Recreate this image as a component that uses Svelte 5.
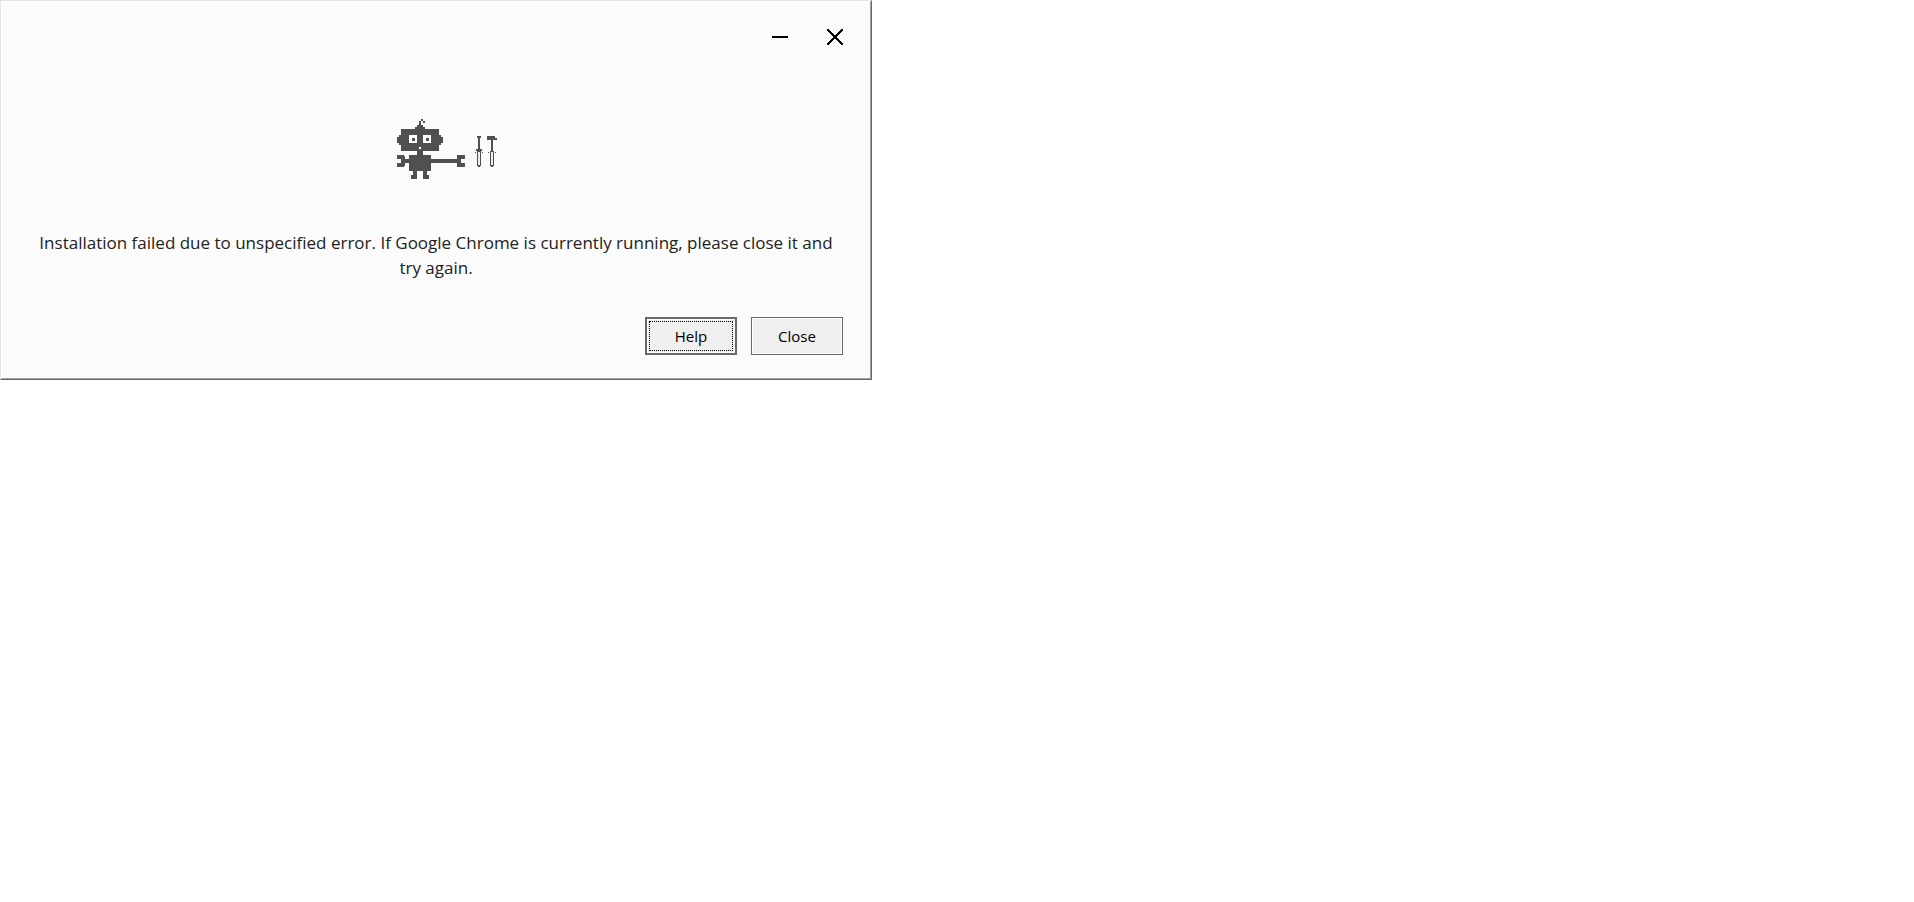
<script>
  let open = $state(true);
  const message =
    'Installation failed due to unspecified error. If Google Chrome is currently running, please close it and try again.';
</script>

{#if open}
  <main class="dialog">
    <div class="content">
      <header>
        <button class="caption" aria-label="Minimize">
          <svg width="16" height="16" viewBox="0 0 16 16"><path d="M0 7h16v2H0z" /></svg>
        </button>
        <button class="caption" aria-label="Close window" onclick={() => (open = false)}>
          <svg width="16" height="16" viewBox="0 0 16 16" shape-rendering="crispEdges">
            <path d="M1 1l14 14M15 1L1 15" fill="none" stroke="#000" stroke-width="2" stroke-linecap="square" />
          </svg>
        </button>
      </header>

      <svg class="robot" width="102" height="60" viewBox="0 0 102 60" shape-rendering="crispEdges" aria-hidden="true">
        <g fill="#505050">
          <!-- antenna -->
          <path d="M24 0h2v2h-2zM26 2h2v2h-2zM22 2h2v4h2v2h2v2H18V8h2V6h2z" />
          <!-- head and neck -->
          <path d="M4 10h38v6h2v2h2v6h-2v2h-2v6H26v4h-6v-4H4v-6H2v-2H0v-6h2v-2h2z" />
          <!-- body and legs -->
          <path d="M12 36h22v16h-4v4h2v4h-6v-8h-6v8h-6v-4h2v-4h-4z" />
          <!-- arms and claws -->
          <path d="M0 36h7v1h1v3h4v4H8v3H7v1H0v-4h4v-4H0z" />
          <path d="M34 40h26v-4h8v4h-4v4h4v4h-8v-4H34z" />
        </g>
        <path d="M12 16h8v8h-8zM26 16h8v8h-8zM22 28h2v2h-2z" fill="#fff" />
        <path d="M15 19h3v3h-3zM29 19h3v3h-3z" fill="#505050" />
        <g fill="#505050">
          <!-- screwdriver -->
          <path d="M80 17h4v2h-1v11h2v2h-1v15h-1v1h-2v-1h-1V32h-1v-2h2V19h-1zM78 33h1v1h-1zM85 33h1v1h-1z" />
          <!-- hammer -->
          <path d="M90 17h8v2h2v2h-4v11h1v15h-1v1h-2v-1h-1V32h1V21h-4zM91 33h1v1h-1zM98 33h1v1h-1z" />
        </g>
        <path d="M81 33h2v13h-2zM94 33h2v13h-2z" fill="#eee" />
      </svg>

      <p>{message}</p>

      <footer>
        <button class="action primary"><span>Help</span></button>
        <button class="action" onclick={() => (open = false)}><span>Close</span></button>
      </footer>
    </div>
  </main>
{/if}

<style>
  :global(body) {
    margin: 0;
    background: #fff;
  }
  .dialog {
    box-sizing: border-box;
    width: 100%;
    max-width: 872px;
    border: 1px solid;
    border-color: #e3e3e3 #696969 #696969 #e3e3e3;
    font-family: 'Open Sans', 'Noto Sans', sans-serif;
    color: #222;
  }
  .content {
    display: flex;
    flex-direction: column;
    align-items: center;
    border: 1px solid;
    border-color: #fff #a0a0a0 #a0a0a0 #fff;
    background: #fbfbfb;
  }
  header {
    display: flex;
    align-self: stretch;
    justify-content: flex-end;
    gap: 15px;
    padding: 15px 15px 0;
  }
  .caption {
    display: grid;
    place-items: center;
    width: 40px;
    height: 40px;
    padding: 0;
    border: 0;
    background: transparent;
  }
  .robot {
    margin: 62px 0 0 24px;
  }
  p {
    margin: 51px 32px 0;
    font-size: 17px;
    line-height: 25px;
    text-align: center;
  }
  footer {
    display: flex;
    align-self: stretch;
    justify-content: flex-end;
    gap: 14px;
    padding: 37px 27px 23px;
  }
  .action {
    width: 92px;
    height: 38px;
    padding: 1px;
    border: 1px solid #696969;
    background: #efefef;
    box-shadow: inset 0 0 0 1px #fff;
    font-family: inherit;
    font-size: 15px;
    line-height: 20px;
    color: #000;
  }
  .action span {
    display: grid;
    place-items: center;
    box-sizing: border-box;
    height: 100%;
    border: 1px solid transparent;
  }
  .primary {
    border-width: 2px;
    padding: 2px;
  }
  .primary span {
    border: 1px dotted #000;
  }
</style>
